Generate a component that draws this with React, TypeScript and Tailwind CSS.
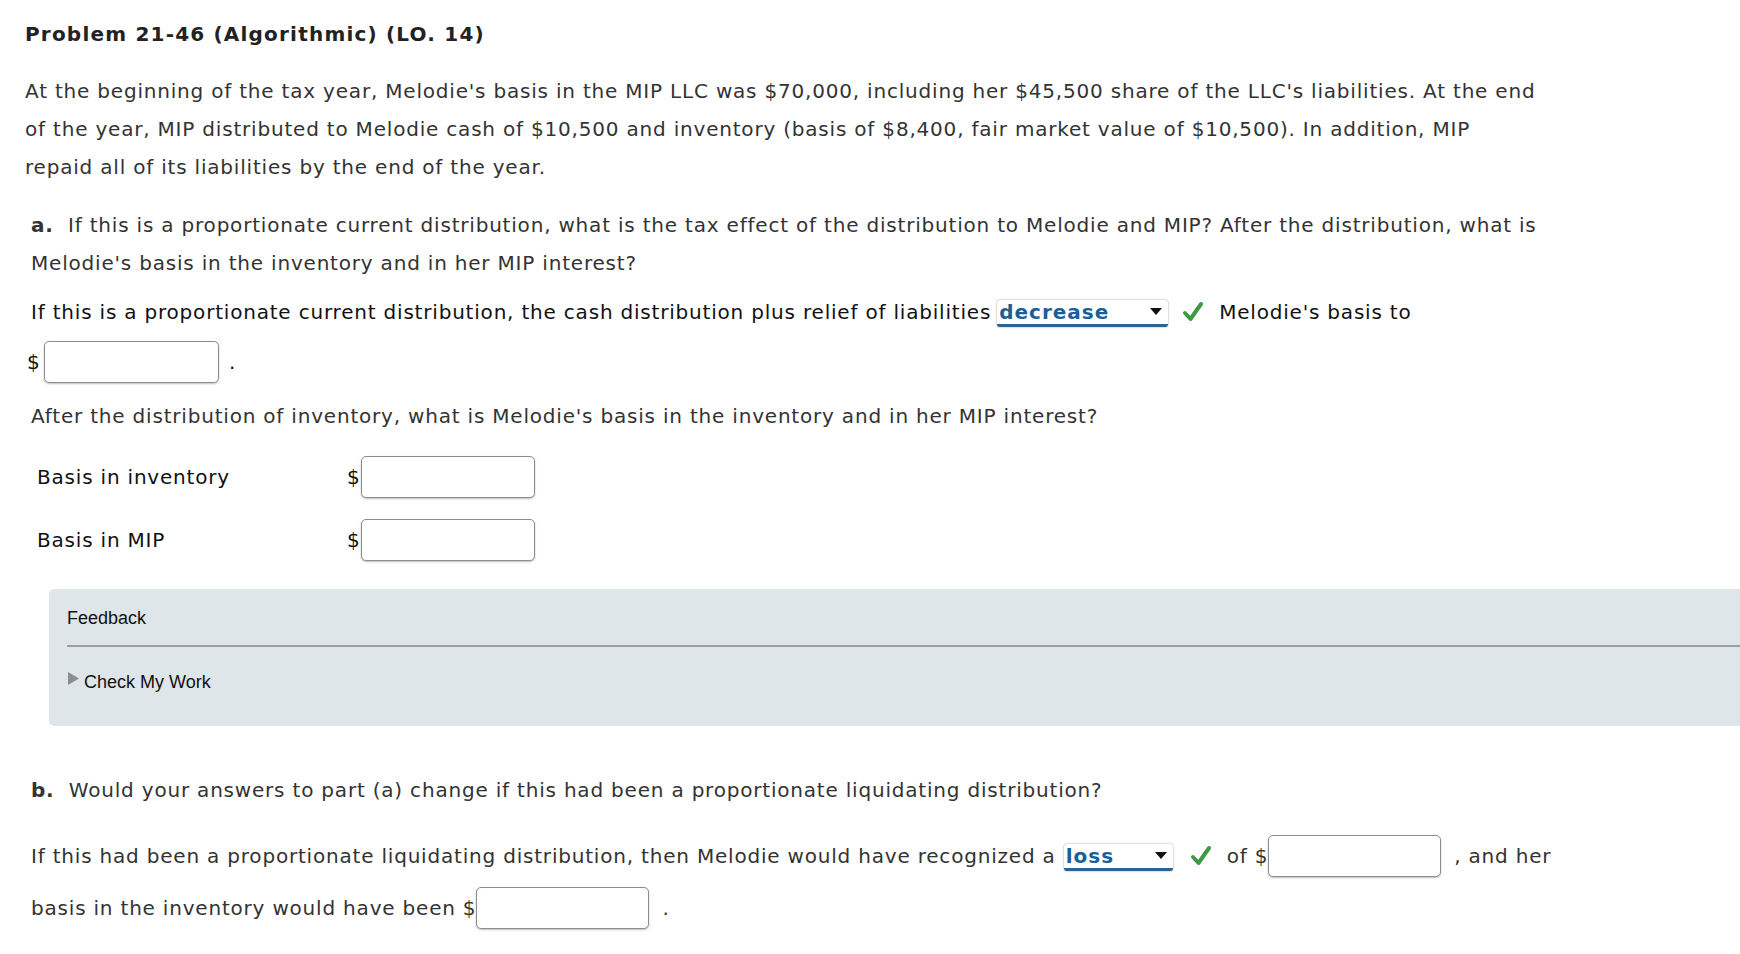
import React from "react";

const font = { fontFamily: '"DejaVu Sans", Verdana, sans-serif' };

function Check() {
  return (
    <svg width="22" height="22" viewBox="0 0 22 22" className="shrink-0">
      <path d="M3 12 L8.5 18 L19 3" fill="none" stroke="#3d9a42" strokeWidth="4" strokeLinecap="round" strokeLinejoin="round" />
    </svg>
  );
}

function Select({ value, width }: { value: string; width: string }) {
  return (
    <span className={`relative inline-flex items-center h-[27px] ${width} bg-white rounded-[3px] shadow-[0_0_2px_rgba(0,0,0,0.45)] border-b-[3px] border-[#2b6494] align-middle`}>
      <span className="pl-[2px] font-bold text-[#1c5f97] text-[20px] tracking-[1px] leading-none">{value}</span>
      <svg width="12" height="8" viewBox="0 0 12 8" className="absolute right-[6px] top-[8px]">
        <path d="M0 0 L12 0 L6 7 Z" fill="#111" />
      </svg>
    </span>
  );
}

function Input({ width }: { width: string }) {
  return (
    <span className={`inline-block shrink-0 h-[42px] ${width} bg-white border border-[#8c8c8c] rounded-[5px] shadow-[0_1px_2px_rgba(0,0,0,0.25)]`} />
  );
}

export default function App() {
  return (
    <div className="w-full min-h-[954px] overflow-hidden bg-white text-[#333] tracking-[0.8px]" style={font}>
      <div className="pl-[25px] pt-[15px]">
        <div className="text-[20px] leading-[38px] font-bold text-[#222] tracking-[1.2px]">Problem 21-46 (Algorithmic) (LO. 14)</div>
        <p className="mt-[19px] text-[20px] leading-[38px] w-[1514px]">
          At the beginning of the tax year, Melodie's basis in the MIP LLC was $70,000, including her $45,500 share of the LLC's liabilities. At the end of the year, MIP distributed to Melodie cash of $10,500 and inventory (basis of $8,400, fair market value of $10,500). In addition, MIP repaid all of its liabilities by the end of the year.
        </p>

        <div className="pl-[6px]">
          <p className="mt-[20px] text-[20px] leading-[38px] w-[1509px]">
            <span className="font-bold">a.</span>&nbsp; If this is a proportionate current distribution, what is the tax effect of the distribution to Melodie and MIP? After the distribution, what is Melodie's basis in the inventory and in her MIP interest?
          </p>

          <div className="mt-[11px] flex items-center h-[38px] text-[20px] text-[#111] whitespace-nowrap">
            <span>If this is a proportionate current distribution, the cash distribution plus relief of liabilities</span>
            <span className="ml-[6px]"><Select value="decrease" width="w-[171px]" /></span>
            <span className="ml-[14px]"><Check /></span>
            <span className="ml-[15px]">Melodie's basis to</span>
          </div>

          <div className="mt-[10px] -ml-[4px] flex items-center text-[20px] text-[#111]">
            <span className="w-[17px]">$</span>
            <Input width="w-[175px]" />
            <span className="ml-[10px]">.</span>
          </div>

          <p className="mt-[14px] text-[20px] leading-[38px]">After the distribution of inventory, what is Melodie's basis in the inventory and in her MIP interest?</p>

          <div className="mt-[21px] pl-[6px] flex items-center text-[20px] text-[#111]">
            <span className="w-[310px]">Basis in inventory</span>
            <span className="w-[14px]">$</span>
            <Input width="w-[174px]" />
          </div>
          <div className="mt-[21px] pl-[6px] flex items-center text-[20px] text-[#111]">
            <span className="w-[310px]">Basis in MIP</span>
            <span className="w-[14px]">$</span>
            <Input width="w-[174px]" />
          </div>
        </div>

        <div className="mt-[28px] ml-[24px] w-[1800px] h-[137px] bg-[#dfe6e9] rounded-l-[5px] pl-[18px] tracking-normal" style={{ fontFamily: '"Liberation Sans", Arial, sans-serif' }}>
          <div className="pt-[18px] h-[58px] text-[18px] text-[#111] border-b-2 border-[#9a9fa2] leading-[22px]">Feedback</div>
          <div className="mt-[24px] flex items-center text-[18px] text-[#111] leading-[22px]">
            <svg width="13" height="16" viewBox="0 0 13 16" className="mr-[4px] -mt-[6px]">
              <path d="M1 1 L12 7.5 L1 14 Z" fill="#8d8d8d" />
            </svg>
            <span>Check My Work</span>
          </div>
        </div>

        <div className="pl-[6px]">
          <p className="mt-[45px] text-[20px] leading-[38px]">
            <span className="font-bold">b.</span>&nbsp; Would your answers to part (a) change if this had been a proportionate liquidating distribution?
          </p>

          <div className="mt-[25px] flex items-center h-[43px] text-[20px] whitespace-nowrap">
            <span>If this had been a proportionate liquidating distribution, then Melodie would have recognized a</span>
            <span className="ml-[8px]"><Select value="loss" width="w-[109px]" /></span>
            <span className="ml-[17px]"><Check /></span>
            <span className="ml-[15px]">of $</span>
            <Input width="w-[173px]" />
            <span className="ml-[13px]">, and her</span>
          </div>

          <div className="mt-[10px] flex items-center h-[42px] text-[20px]">
            <span>basis in the inventory would have been $</span>
            <Input width="w-[173px]" />
            <span className="ml-[13px]">.</span>
          </div>
        </div>
      </div>
    </div>
  );
}
